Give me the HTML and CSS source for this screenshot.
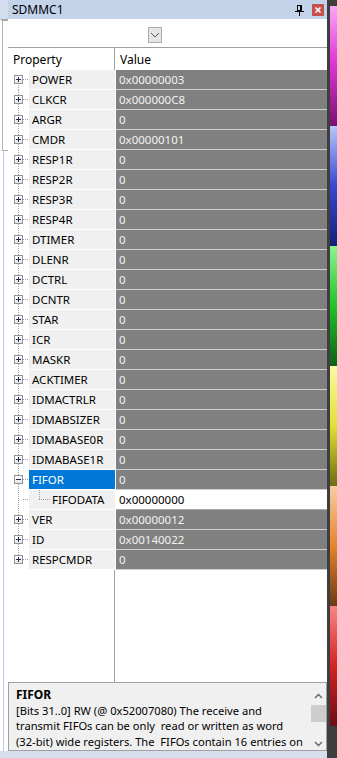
FILE: index.html
```html
<!DOCTYPE html>
<html>
<head>
<meta charset="utf-8">
<link rel="stylesheet" href="styles.css">
</head>
<body>
<div class="left">
  <div class="left-top"></div>
  <div class="left-mid"></div>
  <div class="left-low"></div>
  <div class="bottom-bar"></div>
</div>
<div class="panel">
  <div class="titlebar">
    <span class="title">SDMMC1</span>
    <svg class="pin" width="9" height="11" viewBox="0 0 9 11"><rect x="2.5" y="0.5" width="4" height="5" fill="none" stroke="#000"/><rect x="5" y="1" width="1" height="4" fill="#000"/><rect x="0" y="6" width="9" height="1" fill="#000"/><rect x="4" y="7" width="1" height="4" fill="#000"/></svg>
    <span class="close"><svg width="12" height="12" viewBox="0 0 12 12"><path d="M3.5 3.5 L8.5 8.5 M8.5 3.5 L3.5 8.5" stroke="#fff" stroke-width="1.6"/></svg></span>
  </div>
  <div class="toolbar">
    <span class="dropbtn"><svg width="10" height="6" viewBox="0 0 10 6"><path d="M1 1 L5 5 L9 1" fill="none" stroke="#555" stroke-width="1"/></svg></span>
  </div>
  <div class="grid">
    <div class="header"><span class="h-prop">Property</span><span class="h-val">Value</span></div>
    <div class="row"><div class="exp first"><span class="box plus"></span></div><div class="name">POWER</div><div class="val">0x00000003</div></div>
    <div class="row"><div class="exp"><span class="box plus"></span></div><div class="name">CLKCR</div><div class="val">0x000000C8</div></div>
    <div class="row"><div class="exp"><span class="box plus"></span></div><div class="name">ARGR</div><div class="val">0</div></div>
    <div class="row"><div class="exp"><span class="box plus"></span></div><div class="name">CMDR</div><div class="val">0x00000101</div></div>
    <div class="row"><div class="exp"><span class="box plus"></span></div><div class="name">RESP1R</div><div class="val">0</div></div>
    <div class="row"><div class="exp"><span class="box plus"></span></div><div class="name">RESP2R</div><div class="val">0</div></div>
    <div class="row"><div class="exp"><span class="box plus"></span></div><div class="name">RESP3R</div><div class="val">0</div></div>
    <div class="row"><div class="exp"><span class="box plus"></span></div><div class="name">RESP4R</div><div class="val">0</div></div>
    <div class="row"><div class="exp"><span class="box plus"></span></div><div class="name">DTIMER</div><div class="val">0</div></div>
    <div class="row"><div class="exp"><span class="box plus"></span></div><div class="name">DLENR</div><div class="val">0</div></div>
    <div class="row"><div class="exp"><span class="box plus"></span></div><div class="name">DCTRL</div><div class="val">0</div></div>
    <div class="row"><div class="exp"><span class="box plus"></span></div><div class="name">DCNTR</div><div class="val">0</div></div>
    <div class="row"><div class="exp"><span class="box plus"></span></div><div class="name">STAR</div><div class="val">0</div></div>
    <div class="row"><div class="exp"><span class="box plus"></span></div><div class="name">ICR</div><div class="val">0</div></div>
    <div class="row"><div class="exp"><span class="box plus"></span></div><div class="name">MASKR</div><div class="val">0</div></div>
    <div class="row"><div class="exp"><span class="box plus"></span></div><div class="name">ACKTIMER</div><div class="val">0</div></div>
    <div class="row"><div class="exp"><span class="box plus"></span></div><div class="name">IDMACTRLR</div><div class="val">0</div></div>
    <div class="row"><div class="exp"><span class="box plus"></span></div><div class="name">IDMABSIZER</div><div class="val">0</div></div>
    <div class="row"><div class="exp"><span class="box plus"></span></div><div class="name">IDMABASE0R</div><div class="val">0</div></div>
    <div class="row"><div class="exp"><span class="box plus"></span></div><div class="name">IDMABASE1R</div><div class="val">0</div></div>
    <div class="row"><div class="exp"><span class="box minus"></span></div><div class="name selected">FIFOR</div><div class="val">0</div></div>
    <div class="row"><div class="exp"></div><div class="name child">FIFODATA</div><div class="val editable">0x00000000</div></div>
    <div class="row"><div class="exp"><span class="box plus"></span></div><div class="name">VER</div><div class="val">0x00000012</div></div>
    <div class="row"><div class="exp"><span class="box plus"></span></div><div class="name">ID</div><div class="val">0x00140022</div></div>
    <div class="row"><div class="exp last"><span class="box plus"></span></div><div class="name">RESPCMDR</div><div class="val">0</div></div>
    <div class="fill"></div>
  </div>
  <div class="desc">
    <div class="desc-text">
      <div class="desc-title">FIFOR</div>
      <div class="desc-body">[Bits 31..0] RW (@ 0x52007080) The receive and
transmit FIFOs can be only  read or written as word
(32-bit) wide registers. The  FIFOs contain 16 entries on</div>
    </div>
    <div class="scroll">
      <svg class="arrow" width="9" height="6" viewBox="0 0 9 6"><path d="M1 5 L4.5 1.5 L8 5" fill="none" stroke="#606060" stroke-width="1.3"/></svg>
      <div class="thumb"></div>
      <div class="track"></div>
      <svg class="arrow" width="9" height="6" viewBox="0 0 9 6"><path d="M1 1 L4.5 4.5 L8 1" fill="none" stroke="#606060" stroke-width="1.3"/></svg>
    </div>
  </div>
  <div class="bottom-bar"></div>
</div>
<div class="sep"></div>
<div class="palette">
  <div class="pal-top"></div>
  <div class="band pink"></div>
  <div class="band blue"></div>
  <div class="band green"></div>
  <div class="band yellow"></div>
  <div class="band orange"></div>
  <div class="band red"></div>
  <div class="pal-bottom"></div>
</div>
</body>
</html>
```

FILE: styles.css
```css
* { box-sizing: border-box; }
html, body { margin: 0; padding: 0; }
body {
  width: 337px;
  height: 758px;
  overflow: hidden;
  display: flex;
  font-family: "Segoe UI", "Noto Sans", sans-serif;
  font-size: 11.5px;
  color: #000;
  background: #fff;
}

/* left strip (another window behind) */
.left { width: 8px; display: flex; flex-direction: column; }
.left-top { height: 19px; background: #d3dded; }
.left-mid { height: 131px; background: #fff; border-top: 2px solid #a8a8a8; border-left: 2px solid #fff; box-shadow: inset 1px 0 0 #b4b4b4; }
.left-low { flex: 1; background: #fff; border-top: 1px solid #b0b0b0; border-left: 3px solid #fff; box-shadow: inset 1px 0 0 #b9cbe4; }
.bottom-bar { height: 7px; background: #d6dfeb; flex: none; }

/* main panel */
.panel { width: 319px; display: flex; flex-direction: column; background: #fff; }
.titlebar {
  height: 19px;
  flex: none;
  background: #c2d3ea;
  display: flex;
  align-items: center;
  padding-left: 4px;
}
.title { font-size: 12px; flex: 1; line-height: 19px; }
.pin { margin-right: 8px; margin-top: 1px; }
.close {
  width: 12px;
  height: 12px;
  background: #c75050;
  margin-right: 3px;
  display: flex;
}
.toolbar {
  height: 29px;
  flex: none;
  border-bottom: 1px solid #a0a0a0;
  padding: 8px 0 0 140px;
}
.dropbtn {
  width: 14px;
  height: 16px;
  border: 1px solid #adadad;
  background: #e5e5e5;
  display: flex;
  align-items: center;
  justify-content: center;
}

.grid {
  flex: 1;
  display: flex;
  flex-direction: column;
  background: linear-gradient(#a0a0a0, #a0a0a0) 106px 0 / 1px 100% no-repeat, #fff;
}
.header {
  height: 22px;
  display: flex;
  align-items: center;
  font-size: 12px;
}
.h-prop { width: 107px; padding-left: 5px; }
.h-val { padding-left: 5px; }

.row {
  height: 20px;
  display: grid;
  grid-template-columns: 20px 86px 213px;
  column-gap: 1px;
}
.exp {
  display: flex;
  align-items: flex-start;
  padding: 5px 0 0 6px;
  background:
    repeating-linear-gradient(to bottom, #a0a0a0 0 1px, transparent 1px 2px) 10px 0 / 1px 100% no-repeat,
    repeating-linear-gradient(to right, #a0a0a0 0 1px, transparent 1px 2px) 15px 9px / 5px 1px no-repeat,
    #fff;
}
.exp.first {
  background:
    repeating-linear-gradient(to bottom, #a0a0a0 0 1px, transparent 1px 2px) 10px 9px / 1px 11px no-repeat,
    repeating-linear-gradient(to right, #a0a0a0 0 1px, transparent 1px 2px) 15px 9px / 5px 1px no-repeat,
    #fff;
}
.exp.last {
  background:
    repeating-linear-gradient(to bottom, #a0a0a0 0 1px, transparent 1px 2px) 10px 0 / 1px 10px no-repeat,
    repeating-linear-gradient(to right, #a0a0a0 0 1px, transparent 1px 2px) 15px 9px / 5px 1px no-repeat,
    #fff;
}
.box {
  width: 9px;
  height: 9px;
  border: 1px solid #919191;
}
.box.plus {
  background:
    linear-gradient(#1e3050, #1e3050) 1px 3px / 5px 1px no-repeat,
    linear-gradient(#1e3050, #1e3050) 3px 1px / 1px 5px no-repeat,
    linear-gradient(#ffffff, #e8e8e8);
}
.box.minus {
  background:
    linear-gradient(#1e3050, #1e3050) 1px 3px / 5px 1px no-repeat,
    linear-gradient(#ffffff, #e8e8e8);
}
.name {
  background: #f0f0f0;
  border-bottom: 1px solid #fff;
  line-height: 19px;
  padding-left: 3px;
  white-space: nowrap;
  overflow: hidden;
}
.name.selected { background: #0078d7; color: #fff; }
.name.child {
  padding-left: 23px;
  background:
    repeating-linear-gradient(to bottom, #a0a0a0 0 1px, transparent 1px 2px) 10px 0 / 1px 10px no-repeat,
    repeating-linear-gradient(to right, #a0a0a0 0 1px, transparent 1px 2px) 10px 9px / 12px 1px no-repeat,
    #f0f0f0;
}
.val {
  background: #808080;
  border-bottom: 1px solid #d0d0d0;
  color: #f2f2f2;
  line-height: 19px;
  padding-left: 3px;
  white-space: nowrap;
}
.val.editable { background: #fff; color: #000; border-bottom-color: #a8a8a8; }
.fill { flex: 1; }

/* description panel */
.desc {
  height: 69px;
  flex: none;
  border: 1px solid #a0a0a0;
  background: #f0f0f0;
  display: flex;
  overflow: hidden;
}
.desc-text {
  flex: 1;
  padding: 4px 0 0 7px;
  font-size: 11.15px;
  line-height: 15.6px;
  overflow: hidden;
  white-space: nowrap;
}
.desc-title { font-weight: bold; font-size: 12px; }
.desc-body { white-space: pre; }
.scroll {
  width: 16px;
  flex: none;
  display: flex;
  flex-direction: column;
  align-items: center;
  padding-top: 10px;
}
.arrow { flex: none; }
.thumb { width: 15px; height: 17px; background: #cdcdcd; margin-top: 6px; flex: none; }
.track { flex: 1; }
.scroll .arrow:last-child { margin-bottom: 3px; }

.sep { width: 3px; background: #3e3e3e; }
.palette { width: 7px; display: flex; flex-direction: column; }
.pal-top { height: 6px; background: #3e3e3e; }
.band { height: 120px; }
.pink { background: linear-gradient(#f9a8f6, #e23ad6 45%, #7a0f72); }
.blue { background: linear-gradient(#b8c6f8, #3748d2 50%, #132275); }
.green { background: linear-gradient(#8ff28f, #22c22a 50%, #0e5f16); }
.yellow { background: linear-gradient(#fafaa8, #e2df34 50%, #6e6c12); }
.orange { background: linear-gradient(#f9cca6, #e4842e 50%, #6d3a12); }
.red { background: linear-gradient(#f98686, #d42222 50%, #6c0d14); }
.pal-bottom { flex: 1; background: #3e3e3e; }
```
